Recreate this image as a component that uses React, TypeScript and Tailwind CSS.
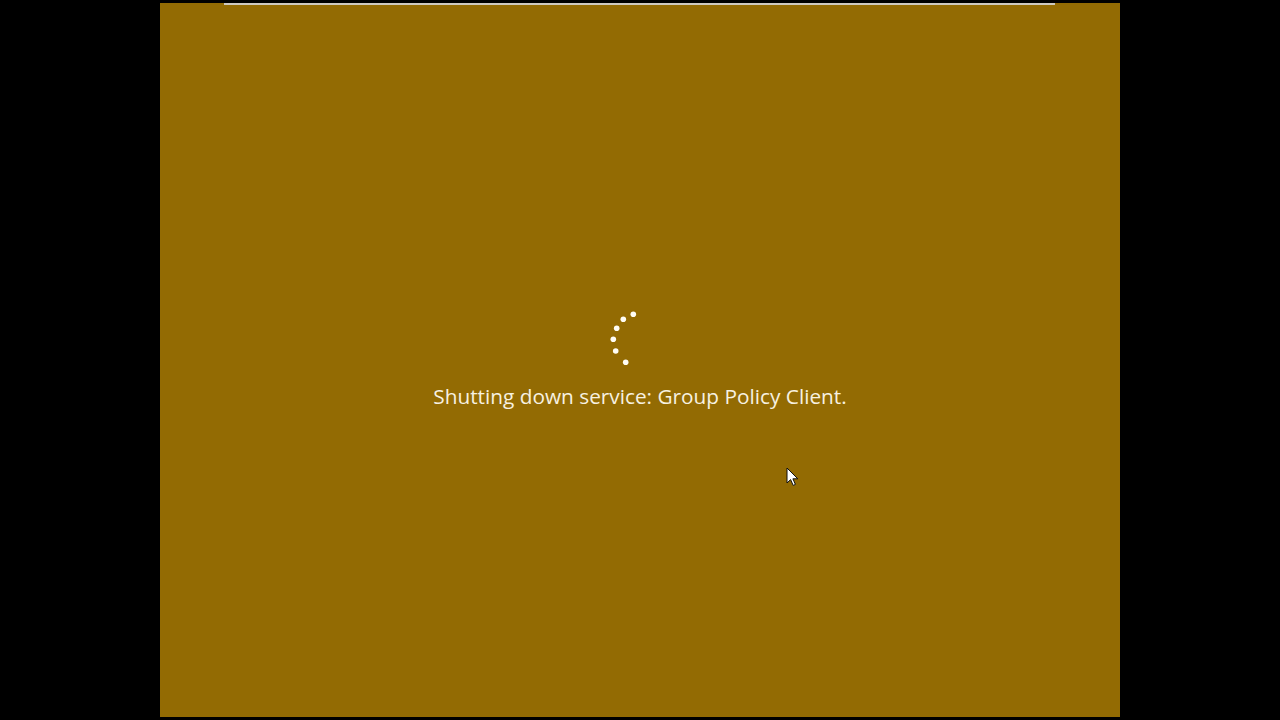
const dots = [
  { cx: 23.3, cy: 6.3 },
  { cx: 13.3, cy: 11.3 },
  { cx: 6.7, cy: 20.3 },
  { cx: 3.3, cy: 31.3 },
  { cx: 5.7, cy: 43 },
  { cx: 15.7, cy: 54.3 },
];

function Spinner() {
  return (
    <svg width="60" height="60" viewBox="0 0 60 60" className="block">
      {dots.map((d, i) => (
        <circle key={i} cx={d.cx} cy={d.cy} r="2.8" fill="#fffdf5" />
      ))}
    </svg>
  );
}

function Cursor() {
  return (
    <svg width="14" height="20" viewBox="0 0 14 20" className="absolute left-[786px] top-[467px]">
      <path
        d="M1 1 L1 16 L4.6 12.6 L7.2 18.4 L9.4 17.4 L6.9 11.8 L11.8 11.8 Z"
        fill="#ffffff"
        stroke="#111111"
        strokeWidth="1"
        strokeLinejoin="round"
      />
    </svg>
  );
}

export default function App() {
  return (
    <div className="relative w-full h-[720px] bg-black flex justify-center pt-[3px] overflow-hidden">
      <div className="w-[960px] h-[714px] bg-[#936b03] flex flex-col items-center">
        <div className="self-start ml-[64px] w-[831px] h-[2px] bg-[#cfcac0]" />
        <div className="mt-[303px]">
          <Spinner />
        </div>
        <p
          className="mt-[14px] text-[20.8px] leading-[28px] text-[#f7f1e1]"
          style={{ fontFamily: '"Open Sans", "Noto Sans", sans-serif' }}
        >
          Shutting down service: Group Policy Client.
        </p>
      </div>
      <Cursor />
    </div>
  );
}
